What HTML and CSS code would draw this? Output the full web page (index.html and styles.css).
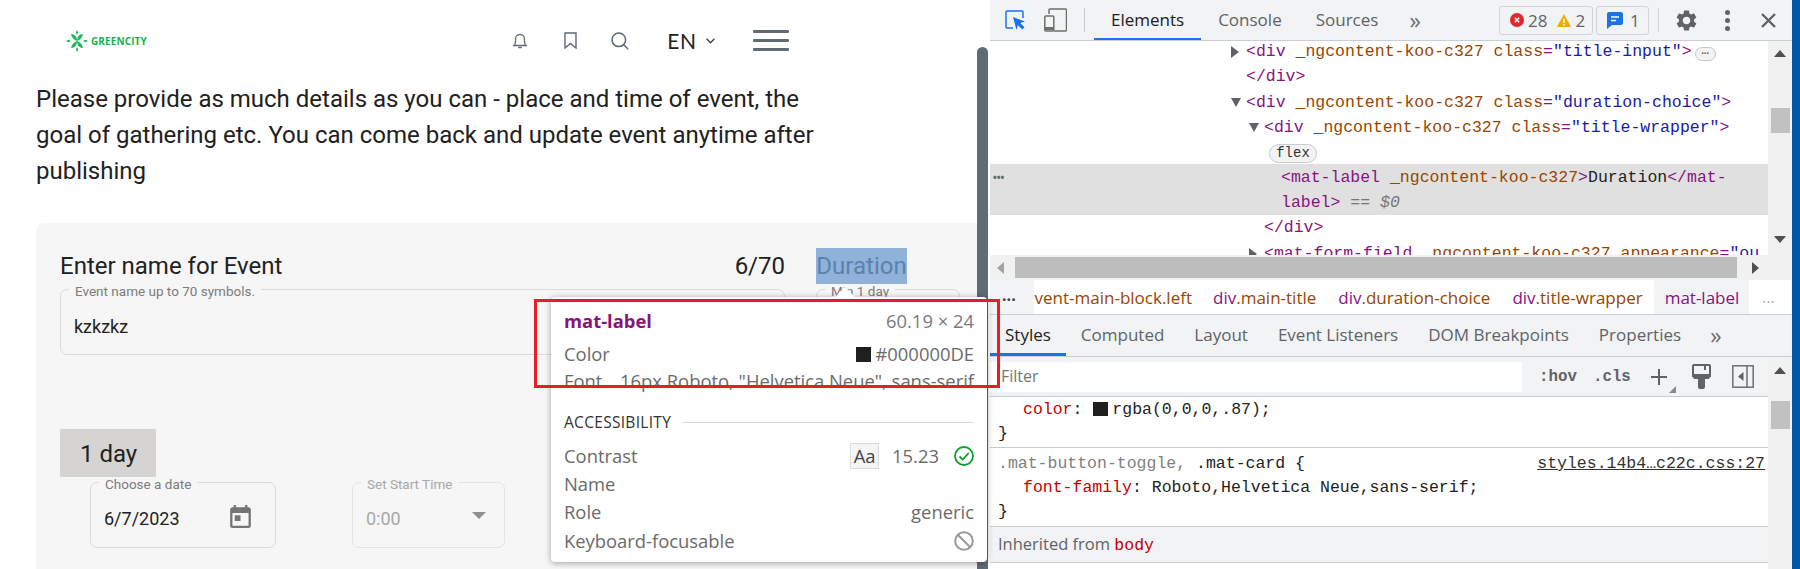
FILE: index.html
```html
<!DOCTYPE html>
<html lang="en">
<head>
<meta charset="utf-8">
<title>GreenCity - DevTools</title>
<link rel="stylesheet" href="styles.css">
</head>
<body>
<div class="window">
  <main class="page">
    <div class="page-main">
      <header class="topbar">
        <div class="logo">
          <svg class="logo-mark" viewBox="0 0 22 22" width="22" height="22" fill="#1db954">
            <path d="M11 11C8 10 6 8 5 4c4 0 6 3 6 7zM11 11c3-1 5-3 6-7-4 0-6 3-6 7zM11 11c-3 1-5 3-6 7 4 0 6-3 6-7zM11 11c3 1 5 3 6 7-4 0-6-3-6-7z"/>
            <path d="M11 0l1.200 2.500L11 5 9.800 2.500zM11 17l1.200 2.500L11 22l-1.200-2.500zM0 11l2.500-1.200L5 11l-2.500 1.200zM17 11l2.500-1.200L22 11l-2.500 1.200z"/>
          </svg>
          <span class="logo-text">GREENCITY</span>
        </div>
        <div class="nav">
          <span class="nav-slot"><svg viewBox="0 0 14 16" width="14" height="16" fill="none" stroke="#5f6b75" stroke-width="1.300"><path d="M1 12.500c1.200-1 1.500-2 1.500-3.500V6a4.500 4.500 0 0 1 9 0v3c0 1.500.3 2.500 1.500 3.500z"/><path d="M5.800 14.500h2.400" stroke-width="1.600" stroke-linecap="round"/></svg></span>
          <span class="nav-slot"><svg viewBox="0 0 13 17" width="13" height="17" fill="none" stroke="#5f6b75" stroke-width="1.400"><path d="M1 1h11v15l-5.500-4.500L1 16z"/></svg></span>
          <span class="nav-slot"><svg viewBox="0 0 18 18" width="18" height="18" fill="none" stroke="#5f6b75" stroke-width="1.500"><circle cx="7.800" cy="7.800" r="6.800"/><path d="M12.800 12.800l4.400 4.400"/></svg></span>
          <span class="lang">EN</span>
          <svg class="lang-chevron" viewBox="0 0 9 6" width="9" height="6" fill="none" stroke="#444" stroke-width="1.400"><path d="M.6.8l3.900 3.900L8.400.8"/></svg>
          <span class="burger"><i></i><i></i><i></i></span>
        </div>
      </header>
      <p class="intro">Please provide as much details as you can - place and time of event, the goal of gathering etc. You can come back and update event anytime after publishing</p>
      <section class="card">
        <div class="card-top">
          <div class="name-col">
            <div class="title-row"><span>Enter name for Event</span><span>6/70</span></div>
            <div class="field name-field">
              <span class="field-label">Event name up to 70 symbols.</span>
              <span class="field-value">kzkzkz</span>
            </div>
          </div>
          <div class="duration-col">
            <div class="duration">Duration</div>
            <div class="field min-field">
              <span class="field-label">Min 1 day</span>
            </div>
          </div>
        </div>
        <div class="day-chip">1 day</div>
        <div class="date-row">
          <div class="field date-field">
            <span class="field-label">Choose a date</span>
            <span class="field-value">6/7/2023</span>
            <svg class="cal" viewBox="3 1 18 20" width="21" height="23" fill="#757575"><path d="M19 3h-1V1h-2v2H8V1H6v2H5c-1.110 0-1.990.9-1.990 2L3 19c0 1.100.89 2 2 2h14c1.100 0 2-.9 2-2V5c0-1.100-.9-2-2-2zm0 16H5V8h14v11zM7 10h5v5H7z"/></svg>
          </div>
          <div class="field time-field">
            <span class="field-label">Set Start Time</span>
            <span class="field-value">0:00</span>
            <span class="select-arrow"></span>
          </div>
        </div>
      </section>
    </div>
    <div class="page-scroll"><div class="page-thumb"></div></div>
  </main>

  <aside class="devtools">
    <div class="toolbar">
      <svg class="ic-inspect" viewBox="0 0 20 20" width="20" height="20" fill="none"><path d="M8 18H2a1 1 0 0 1-1-1V2a1 1 0 0 1 1-1h15a1 1 0 0 1 1 1v6" stroke="#1a73e8" stroke-width="1.500"/><path d="M8 7l12 4.500-4.800 1.400 4.300 4.300-2.300 2.300-4.300-4.300L11.500 20z" fill="#1a73e8"/></svg>
      <svg class="ic-device" viewBox="0 0 23 24" width="23" height="24" fill="none" stroke="#6e6e6e" stroke-width="1.500"><path d="M5 6V2a1 1 0 0 1 1-1h15.500a1 1 0 0 1 1 1v20a1 1 0 0 1-1 1H10"/><rect x=".8" y="8" width="9" height="15" rx="1"/><path d="M1 20.500h9" stroke-width="3"/></svg>
      <span class="tb-sep"></span>
      <span class="tab active">Elements</span>
      <span class="tab">Console</span>
      <span class="tab">Sources</span>
      <span class="more">»</span>
      <div class="tb-right">
        <span class="badge badge-issues">
          <svg viewBox="0 0 14 14" width="14" height="14"><circle cx="7" cy="7" r="7" fill="#e0282e"/><path d="M4.800 4.800l4.400 4.400M9.200 4.800l-4.400 4.400" stroke="#fff" stroke-width="1.500"/></svg>
          <span class="num">28</span>
          <svg class="warn" viewBox="0 0 14 13" width="14" height="13"><path d="M7 0l7 13H0z" fill="#f2ab00"/><path d="M7 4.500v4.500M7 10v1.500" stroke="#fff" stroke-width="1.500"/></svg>
          <span class="num">2</span>
        </span>
        <span class="badge badge-msg">
          <svg viewBox="0 0 16 17" width="16" height="17"><path d="M2 0h12a2 2 0 0 1 2 2v9a2 2 0 0 1-2 2H5l-5 4V2a2 2 0 0 1 2-2z" fill="#1a73e8"/><path d="M4 5h8M4 8.500h5" stroke="#fff" stroke-width="1.500"/></svg>
          <span class="num">1</span>
        </span>
        <span class="tb-sep2"></span>
        <svg class="ic-gear" viewBox="2.400 2 19.200 20" width="21" height="21" fill="#5f6368"><path d="M19.140 12.940c.04-.3.06-.61.06-.94 0-.32-.02-.64-.07-.94l2.030-1.580c.18-.14.23-.41.12-.61l-1.920-3.320c-.12-.22-.37-.29-.59-.22l-2.390.96c-.5-.38-1.030-.7-1.620-.94l-.36-2.540c-.04-.24-.24-.41-.48-.41h-3.840c-.24 0-.43.17-.47.41l-.36 2.540c-.59.24-1.130.57-1.620.94l-2.390-.96c-.22-.08-.47 0-.59.22L2.740 8.870c-.12.21-.08.47.12.61l2.030 1.580c-.05.3-.09.63-.09.94s.02.64.07.94l-2.030 1.580c-.18.14-.23.41-.12.61l1.920 3.320c.12.22.37.29.59.22l2.390-.96c.5.38 1.030.7 1.620.94l.36 2.540c.05.24.24.41.48.41h3.840c.24 0 .44-.17.47-.41l.36-2.540c.59-.24 1.130-.56 1.620-.94l2.390.96c.22.08.47 0 .59-.22l1.920-3.320c.12-.22.07-.47-.12-.61l-2.010-1.580zM12 15.600c-1.980 0-3.600-1.620-3.600-3.600s1.620-3.600 3.600-3.600 3.600 1.620 3.600 3.600-1.620 3.600-3.600 3.600z"/></svg>
        <span class="dots"><i></i><i></i><i></i></span>
        <svg class="ic-close" viewBox="0 0 15 15" width="15" height="15" stroke="#5f6368" stroke-width="2.400"><path d="M1 1l13 13M14 1L1 14"/></svg>
      </div>
    </div>

    <div class="dom-area">
      <div class="dom-lines">
        <div class="dom-line ind1"><span class="tri right"></span><span class="tag">&lt;div</span> <span class="attr">_ngcontent-koo-c327</span> <span class="attr">class</span><span class="tag">=</span><span class="val">"title-input"</span><span class="tag">&gt;</span><span class="ell">•••</span></div>
        <div class="dom-line ind1"><span class="tag">&lt;/div&gt;</span></div>
        <div class="dom-line ind1"><span class="tri down"></span><span class="tag">&lt;div</span> <span class="attr">_ngcontent-koo-c327</span> <span class="attr">class</span><span class="tag">=</span><span class="val">"duration-choice"</span><span class="tag">&gt;</span></div>
        <div class="dom-line ind2"><span class="tri down"></span><span class="tag">&lt;div</span> <span class="attr">_ngcontent-koo-c327</span> <span class="attr">class</span><span class="tag">=</span><span class="val">"title-wrapper"</span><span class="tag">&gt;</span></div>
        <div class="flex-line"><span class="flex-badge">flex</span></div>
        <div class="dom-selected">
          <span class="sel-dots">•••</span>
          <div class="dom-line ind3"><span class="tag">&lt;mat-label</span> <span class="attr">_ngcontent-koo-c327</span><span class="tag">&gt;</span><span class="txt">Duration</span><span class="tag">&lt;/mat-</span></div>
          <div class="dom-line ind3"><span class="tag">label&gt;</span> <span class="eq">== <em>$0</em></span></div>
        </div>
        <div class="dom-line ind2"><span class="tag">&lt;/div&gt;</span></div>
        <div class="dom-line ind2"><span class="tri right"></span><span class="tag">&lt;mat-form-field</span> <span class="attr">_ngcontent-koo-c327</span> <span class="attr">appearance</span><span class="tag">=</span><span class="val">"ou</span></div>
      </div>
      <div class="vscroll dom-vscroll">
        <span class="arrow-up"></span>
        <span class="vthumb dom-thumb"></span>
        <span class="arrow-down"></span>
      </div>
    </div>
    <div class="hscroll">
      <span class="arrow-left"></span>
      <span class="hthumb"></span>
      <span class="arrow-right"></span>
    </div>

    <div class="crumbs">
      <span class="crumb-more">...</span>
      <div class="crumb-list">
        <span class="crumb first"><b>vent-main-block.left</b></span>
        <span class="crumb"><i>div</i><b>.main-title</b></span>
        <span class="crumb"><i>div</i><b>.duration-choice</b></span>
        <span class="crumb"><i>div</i><b>.title-wrapper</b></span>
        <span class="crumb current"><i>mat-label</i></span>
      </div>
      <span class="crumb-end">...</span>
    </div>

    <div class="subtabs">
      <span class="subtab active">Styles</span>
      <span class="subtab">Computed</span>
      <span class="subtab">Layout</span>
      <span class="subtab">Event Listeners</span>
      <span class="subtab">DOM Breakpoints</span>
      <span class="subtab">Properties</span>
      <span class="more">»</span>
    </div>

    <div class="styles-area">
      <div class="styles-main">
        <div class="filterbar">
          <div class="filter-input">Filter</div>
          <span class="tool-text hov">:hov</span>
          <span class="tool-text cls">.cls</span>
          <span class="plus"><svg viewBox="0 0 16 16" width="16" height="16" stroke="#5f6368" stroke-width="2"><path d="M8 0v16M0 8h16"/></svg><span class="corner"></span></span>
          <svg class="ic-brush" viewBox="0 0 19 25" width="19" height="25"><path d="M2 1h15a1 1 0 0 1 1 1v10H1V2a1 1 0 0 1 1-1z" fill="none" stroke="#5f6368" stroke-width="2"/><path d="M1 10h17v3a2 2 0 0 1-2 2h-3v8a2 2 0 0 1-2 2H8a2 2 0 0 1-2-2v-8H3a2 2 0 0 1-2-2z" fill="#5f6368"/><path d="M12 2v4h2V2z" fill="#5f6368"/></svg>
          <svg class="ic-side" viewBox="0 0 22 23" width="22" height="23" fill="none" stroke="#6e6e6e" stroke-width="1.500"><rect x=".8" y=".8" width="20.400" height="21.400"/><path d="M15 1v21"/><path d="M11.500 7v9L6 11.500z" fill="#5f6368" stroke="none"/></svg>
        </div>
        <div class="rule rule-a">
          <div class="css-line in"><span class="prop">color</span>: <span class="swatch"></span>rgba(0,0,0,.87);</div>
          <div class="css-line">}</div>
        </div>
        <div class="rule rule-b">
          <div class="css-line selector"><span><span class="dim">.mat-button-toggle,</span> .mat-card {</span><a class="src">styles.14b4…c22c.css:27</a></div>
          <div class="css-line in"><span class="prop">font-family</span>: Roboto,Helvetica Neue,sans-serif;</div>
          <div class="css-line">}</div>
        </div>
        <div class="inherited">Inherited from <span class="inh-body">body</span></div>
      </div>
      <div class="vscroll style-vscroll">
        <span class="arrow-up"></span>
        <span class="vthumb style-thumb"></span>
      </div>
    </div>
  </aside>
  <div class="edge"></div>

  <div class="tip">
    <span class="tip-arrow"></span>
    <div class="tip-row"><strong class="tip-tag">mat-label</strong><span class="tip-dim">60.19 × 24</span></div>
    <div class="tip-row"><span>Color</span><span class="tip-val"><span class="tip-swatch"></span>#000000DE</span></div>
    <div class="tip-row"><span>Font</span><span class="tip-val">16px Roboto, "Helvetica Neue", sans-serif</span></div>
    <div class="tip-row tip-head"><span>ACCESSIBILITY</span><span class="tip-rule"></span></div>
    <div class="tip-row"><span>Contrast</span><span class="tip-val"><span class="aa">Aa</span><span class="ratio">15.23</span><svg viewBox="0 0 20 20" width="20" height="20" fill="none" stroke="#0f9d2e" stroke-width="1.800"><circle cx="10" cy="10" r="9"/><path d="M5.500 10.500l3.200 3 6-6.500"/></svg></span></div>
    <div class="tip-row"><span>Name</span></div>
    <div class="tip-row"><span>Role</span><span class="tip-val">generic</span></div>
    <div class="tip-row"><span>Keyboard-focusable</span><span class="tip-val"><svg viewBox="0 0 20 20" width="20" height="20" fill="none" stroke="#9a9a9a" stroke-width="2"><circle cx="10" cy="10" r="8.800"/><path d="M3.800 3.800l12.400 12.400"/></svg></span></div>
  </div>
  <div class="annotation"></div>
</div>
</body>
</html>
```
FILE: styles.css
```css
* { box-sizing: border-box; }
html, body { margin: 0; padding: 0; height: 100%; overflow: hidden; background: #fff; }
.window { position: relative; display: flex; width: 1800px; height: 569px; overflow: hidden; font-family: Roboto, sans-serif; color: #212121; }

/* page */
.page { display: flex; width: 990px; height: 569px; flex: none; }
.page-main { width: 977px; flex: none; overflow: hidden; }
.page-scroll { flex: 1; padding: 47px 2px 0 0; background: #fff; }
.page-thumb { height: 540px; background: #5f6b75; border-radius: 6px 6px 0 0; }

.topbar { display: flex; align-items: center; height: 81px; padding: 0 0 0 66px; }
.logo { display: flex; align-items: center; gap: 3px; }
.logo-text { font: 700 10px/1 "Open Sans", sans-serif; color: #1bb04d; letter-spacing: .1px; }
.nav { display: flex; align-items: center; margin-left: 348.500px; }
.nav-slot { display: flex; justify-content: center; width: 50px; }
.lang { margin-left: 22px; font: 400 21px/24px Lato, sans-serif; letter-spacing: .5px; color: #222; }
.lang-chevron { margin-left: 10px; }
.burger { display: flex; flex-direction: column; gap: 6px; width: 36px; margin-left: 38px; }
.burger i { display: block; height: 3px; background: #5f6b75; border-radius: 1px; }

.intro { width: 790px; margin: 0 0 0 36px; font-size: 24px; line-height: 36px; color: #212121; height: 142px; }

.card { margin-left: 36px; height: 400px; padding: 25px 0 0 24px; background: #f6f6f6; border-radius: 8px 0 0 0; }
.card-top { display: flex; gap: 31px; }
.name-col { width: 725px; }
.title-row { display: flex; justify-content: space-between; font-size: 24px; line-height: 36px; color: #212121; }
.duration-col { width: 144px; }
.duration { width: 91px; height: 36px; font-size: 24px; line-height: 36px; color: #5b82ae; background: #8fb2d8; text-align: center; }

.field { position: relative; display: flex; align-items: center; height: 66px; margin-top: 5px; border: 1px solid #dadada; border-radius: 7px; }
.field-label { position: absolute; top: -6px; left: 8px; padding: 0 6px; background: #f6f6f6; font-size: 13.500px; line-height: 15px; color: #7c7c7c; white-space: nowrap; }
.field-value { padding-left: 13px; font-size: 18px; color: #222; }
.name-field { padding-top: 9px; }

.day-chip { width: 96px; height: 48px; margin-top: 74px; padding-left: 20px; background: #d6d4d3; font-size: 24px; line-height: 51px; color: #212121; }
.date-row { display: flex; gap: 76px; margin: 5px 0 0 30px; }
.date-row .field { margin-top: 0; }
.date-field { width: 186px; padding-top: 7px; }
.cal { position: absolute; top: 22px; left: 139px; }
.time-field { width: 153px; padding-top: 7px; border-color: #e4e4e4; }
.time-field .field-label, .time-field .field-value { color: #a8a8a8; }
.select-arrow { position: absolute; right: 18px; top: 29px; border: 7px solid transparent; border-top: 7px solid #909090; border-bottom: 0; }

/* devtools */
.devtools { display: flex; flex-direction: column; width: 802px; flex: none; height: 569px; font-family: "Open Sans", sans-serif; }
.edge { flex: 1; background: #0058a4; }

.toolbar { display: flex; align-items: center; flex: none; height: 41px; padding-left: 15px; background: #f1f3f4; border-bottom: 1px solid #cacdd1; }
.ic-device { margin-left: 19px; }
.tb-sep { width: 1px; height: 24px; margin: 0 9px 0 17px; background: #c4c7cb; }
.tab { position: relative; align-self: stretch; padding: 0 17px; font-size: 17px; line-height: 39px; color: #5f6368; }
.tab.active { color: #202124; border-bottom: 2px solid #1a73e8; }
.more { margin-left: 14px; font-size: 23px; line-height: 1; color: #6e6e6e; }
.tb-right { display: flex; align-items: center; margin-left: auto; padding-right: 16px; }
.badge { display: flex; align-items: center; height: 29px; border: 1px solid #d0d3d7; border-radius: 3px; font-size: 17px; color: #5f6368; }
.badge-issues { width: 94px; padding-left: 10px; gap: 4px; }
.warn { margin-left: 6px; }
.badge-msg { width: 53px; margin-left: 3px; padding-left: 10px; gap: 7px; }
.tb-sep2 { width: 1px; height: 24px; margin: 0 17px 0 9px; background: #d0d3d7; }
.dots { display: flex; flex-direction: column; gap: 3px; margin: 0 31px 0 28px; }
.dots i { display: block; width: 5px; height: 5px; border-radius: 50%; background: #5f6368; }

.dom-area { display: flex; flex: none; height: 214px; }
.dom-lines { flex: 1; overflow: hidden; background: #fff; }
.dom-line { position: relative; height: 25.500px; font: 16.500px/25.500px "Liberation Mono", monospace; white-space: nowrap; }
.dom-lines > .dom-line:first-child { margin-top: -2.500px; }
.ind1 { padding-left: 256px; }
.ind2 { padding-left: 274px; }
.ind3 { padding-left: 291px; }
.flex-line { display: flex; align-items: flex-end; height: 23.500px; padding: 0 0 1px 279px; }
.tag { color: #881280; }
.attr { color: #994500; }
.val { color: #1a1aa6; }
.txt { color: #222; }
.eq { color: #777; }
.eq em { font-style: italic; }
.tri { position: absolute; margin-left: -15px; margin-top: 7px; width: 0; height: 0; }
.tri.right { border-left: 8px solid #5f6368; border-top: 6px solid transparent; border-bottom: 6px solid transparent; }
.tri.down { margin-left: -15px; margin-top: 8px; border-top: 9px solid #5f6368; border-left: 5.500px solid transparent; border-right: 5.500px solid transparent; }
.ell { display: inline-block; width: 21px; height: 14px; margin-left: 3px; border: 1px solid #c8c8c8; border-radius: 7px; background: #f1f3f4; font: 7px/11px "Open Sans", sans-serif; color: #555; text-align: center; vertical-align: 0; }
.flex-badge { display: block; width: 48px; height: 19px; border: 1px solid #c8ccd0; border-radius: 10px; background: #f1f3f4; font: 14px/17px "Liberation Mono", monospace; color: #333; text-align: center; }
.dom-selected { position: relative; height: 51px; padding-top: 1px; background: #e0e0e0; }
.dom-selected .dom-line { height: 25px; line-height: 25px; }
.sel-dots { position: absolute; left: 3px; top: 7px; font-size: 10px; font-weight: 700; line-height: 12px; color: #666; }

.vscroll { display: flex; flex-direction: column; align-items: center; width: 24px; flex: none; background: #f1f1f1; }
.dom-vscroll { padding-top: 9px; }
.arrow-up { width: 0; height: 0; border-left: 6px solid transparent; border-right: 6px solid transparent; border-bottom: 7px solid #505050; }
.arrow-down { width: 0; height: 0; margin-top: 103px; border-left: 6px solid transparent; border-right: 6px solid transparent; border-top: 7px solid #505050; }
.vthumb { display: block; width: 19px; background: #c1c1c1; }
.dom-thumb { height: 25px; margin-top: 51px; }
.style-vscroll { padding-top: 10px; }
.style-thumb { height: 28px; margin-top: 27px; }

.hscroll { display: flex; align-items: center; flex: none; height: 25px; padding-left: 7px; background: #f1f1f1; }
.arrow-left { width: 0; height: 0; border-top: 6px solid transparent; border-bottom: 6px solid transparent; border-right: 7px solid #a3a3a3; }
.arrow-right { width: 0; height: 0; margin-left: 15px; border-top: 6px solid transparent; border-bottom: 6px solid transparent; border-left: 7px solid #505050; }
.hthumb { display: block; width: 722px; height: 21px; margin-left: 11px; background: #bdbdbd; }

.crumbs { display: flex; flex: none; height: 35px; background: #fff; border-bottom: 1px solid #cacdd1; }
.crumb-more { width: 44px; flex: none; padding-left: 12px; background: #f1f3f4; font-size: 16px; font-weight: 700; line-height: 30px; color: #444; }
.crumb-list { display: flex; width: 715px; flex: none; overflow: hidden; font-size: 17px; line-height: 35px; white-space: nowrap; }
.crumb { flex: none; padding: 0 11px; }
.crumb i { font-style: normal; color: #881280; }
.crumb b { font-weight: 400; color: #994500; }
.crumb.first { display: flex; justify-content: flex-end; width: 158px; padding: 0; overflow: hidden; margin-right: 10px; }
.crumb.current { background: #f1f3f4; }
.crumb-end { margin-left: 13px; font-size: 16px; line-height: 34px; color: #b0b0b0; }

.subtabs { display: flex; align-items: center; flex: none; height: 42px; background: #f1f3f4; border-bottom: 1px solid #cacdd1; }
.subtab { align-self: stretch; padding: 0 15px; font-size: 17px; line-height: 40px; color: #5f6368; }
.subtab.active { color: #202124; border-bottom: 3px solid #1a73e8; }

.styles-area { display: flex; flex: 1; min-height: 0; }
.styles-main { flex: 1; min-width: 0; background: #fff; }
.filterbar { position: relative; display: flex; align-items: center; height: 40px; background: #f1f3f4; border-bottom: 1px solid #cacdd1; }
.filter-input { width: 532px; height: 30px; padding-left: 11px; background: #fff; font-size: 16px; line-height: 29px; color: #757575; }
.tool-text { padding-top: 3px; font: 700 15.800px/1 "Liberation Mono", monospace; color: #5f6368; }
.hov { margin-left: 17px; }
.cls { margin-left: 16px; }
.plus { position: relative; display: flex; margin-left: 20px; }
.corner { position: absolute; left: 18px; top: 17px; border-left: 7px solid transparent; border-bottom: 7px solid #8a8a8a; }
.ic-brush { margin-left: 25px; }
.ic-side { margin-left: 21px; }

.css-line { position: relative; height: 24px; padding-left: 8px; font: 16.500px/24px "Liberation Mono", monospace; color: #222; white-space: nowrap; }
.css-line.in { padding-left: 33px; }
.prop { color: #c80000; }
.dim { color: #808080; }
.swatch { display: inline-block; width: 15px; height: 14px; margin-right: 4px; margin-left: 1px; background: #1f1f1f; vertical-align: -2px; }
.rule { border-bottom: 1px solid #cacdd1; }
.rule-a { height: 51px; padding-top: 1px; }
.rule-b { height: 79px; padding-top: 4px; }
.selector { display: flex; }
.src { margin-left: auto; padding-right: 3px; font: 16.500px/24px "Liberation Mono", monospace; color: #333; text-decoration: underline; }
.inherited { height: 36px; padding-left: 8px; background: #f1f3f4; border-bottom: 1px solid #cacdd1; font-size: 16.500px; line-height: 33px; color: #5f6368; }
.inh-body { font-family: "Liberation Mono", monospace; font-size: 16.500px; color: #c80000; }

/* tooltip overlay */
.tip { position: absolute; left: 551px; top: 297px; width: 436px; height: 265px; padding: 10px 13px 0; display: grid; grid-template-rows: 33px 27px 41px 34px 28px 28px 29px 28px; background: #fff; border-radius: 4px; box-shadow: 0 1px 6px rgba(0,0,0,.35); font-family: "Open Sans", sans-serif; font-size: 18.400px; line-height: 28px; color: #6b6b6b; }
.tip-arrow { position: absolute; left: 284px; top: -10px; border-left: 10px solid transparent; border-right: 10px solid transparent; border-bottom: 10px solid #fff; }
.tip-row { display: flex; justify-content: space-between; align-items: flex-start; white-space: nowrap; }
.tip-tag { font-weight: 700; font-size: 18.400px; color: #881280; }
.tip-dim { color: #7a7a7a; }
.tip-val { display: flex; align-items: center; height: 28px; }
.tip-swatch { width: 15px; height: 15px; margin-right: 4px; background: #1f1f1f; }
.tip-head { align-items: center; height: 28px; gap: 11px; font-size: 15.500px; letter-spacing: .3px; color: #333; }
.tip-rule { flex: 1; height: 1px; background: #d8d8d8; }
.aa { width: 29px; height: 26px; margin-right: 13px; border: 1px solid #dcdcdc; background: #f5f5f5; line-height: 24px; text-align: center; color: #444; }
.ratio { margin-right: 15px; }
.annotation { position: absolute; left: 534px; top: 299px; width: 466px; height: 89px; border: 3px solid #ed1c24; pointer-events: none; }
```
